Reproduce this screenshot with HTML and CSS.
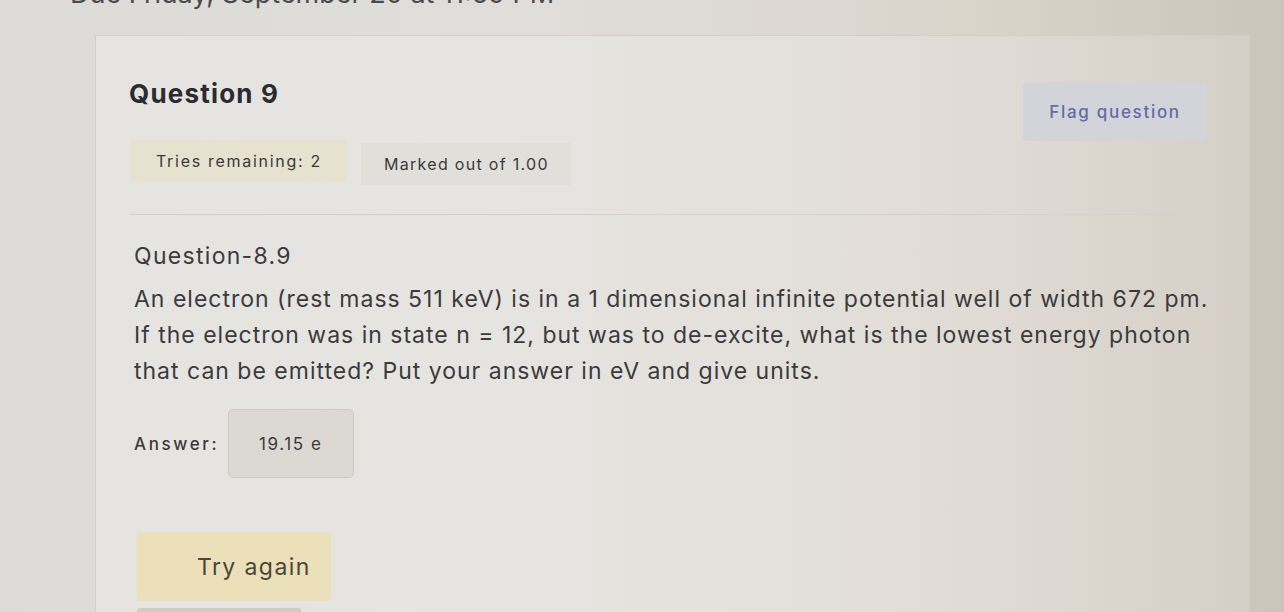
FILE: index.html
```html
<!DOCTYPE html>
<html lang="en">
<head>
<meta charset="utf-8">
<title>Question 9</title>
<link rel="stylesheet" href="styles.css">
</head>
<body>
<div class="due"><span class="due-text">Due Friday, September 20 at 11:59 PM</span></div>
<div class="card">
  <div class="head">
    <div class="head-left">
      <h2 class="qno">Question 9</h2>
      <div class="badges">
        <div class="badge tries">Tries remaining: 2</div>
        <div class="badge marked">Marked out of 1.00</div>
      </div>
    </div>
    <button class="flag">Flag question</button>
  </div>
  <div class="divider"></div>
  <div class="content">
    <p class="qname">Question-8.9</p>
    <p class="qtext">An electron (rest mass 511 keV) is in a 1 dimensional infinite potential well of width 672 pm.<br>If the electron was in state n = 12, but was to de-excite, what is the lowest energy photon<br>that can be emitted? Put your answer in eV and give units.</p>
    <div class="answer">
      <span class="answer-label">Answer:</span>
      <div class="answer-box">19.15 e</div>
    </div>
    <button class="retry">Try again</button>
    <div class="next"></div>
  </div>
</div>
</body>
</html>
```

FILE: styles.css
```css
html, body {
  margin: 0;
  padding: 0;
  height: 612px;
  overflow: hidden;
}
body {
  font-family: Inter, "Noto Sans", sans-serif;
  color: #3b3b3d;
  background: linear-gradient(90deg, #dcdbd8 0%, #e0dedb 40%, #dad4cb 75%, #cbc4ba 100%);
}
.due {
  height: 9px;
  overflow: hidden;
  padding-left: 70px;
}
.due-text {
  display: block;
  margin-top: -21px;
  font-size: 27px;
  line-height: 30px;
  color: #4a4a4c;
  white-space: nowrap;
}
.card {
  margin: 26px 0 0 95px;
  width: 1155px;
  height: 600px;
  box-sizing: border-box;
  border: 1px solid #d2cfca;
  border-bottom: none;
  background: linear-gradient(90deg, rgba(236,235,232,0.55) 0%, rgba(236,234,230,0.45) 60%, rgba(228,224,218,0.35) 100%);
  padding: 40px 42px 0 33px;
}
.head {
  display: flex;
  justify-content: space-between;
  align-items: flex-start;
}
.qno {
  margin: 0;
  font-size: 26px;
  line-height: 35px;
  font-weight: 700;
  letter-spacing: 1.2px;
  color: #2b2b31;
}
.badges {
  display: flex;
  gap: 15px;
  margin-top: 29px;
}
.badge {
  height: 42px;
  display: flex;
  align-items: center;
  font-size: 16px;
  color: #3a3a3c;
  box-sizing: border-box;
}
.tries {
  width: 215px;
  padding-left: 25px;
  background: #e7e2d0;
  margin-left: 2px;
  letter-spacing: 1.7px;
}
.marked {
  width: 210px;
  padding-left: 23px;
  background: #e1dfda;
  margin-top: 3px;
  letter-spacing: 1.3px;
}
.flag {
  margin-top: 6px;
  width: 184px;
  height: 59px;
  border: none;
  border-radius: 4px;
  background: #d3d3da;
  color: #656ba6;
  font-family: inherit;
  font-size: 17px;
  font-weight: 500;
  letter-spacing: 1.7px;
}
.divider {
  margin: 29px 8px 0 2px;
  height: 1px;
  background: #d4d1cc;
}
.content {
  padding: 23px 0 0 5px;
}
.qname {
  margin: 0;
  font-size: 23px;
  line-height: 36px;
  letter-spacing: 1.3px;
}
.qtext {
  margin: 7px 0 0 0;
  font-size: 23px;
  line-height: 36px;
  letter-spacing: 1.0px;
  white-space: nowrap;
}
.answer {
  display: flex;
  align-items: center;
  margin-top: 20px;
}
.answer-label {
  font-size: 17px;
  font-weight: 500;
  letter-spacing: 2.6px;
  width: 94px;
  color: #3a3a3c;
}
.answer-box {
  width: 126px;
  height: 69px;
  box-sizing: border-box;
  display: flex;
  align-items: center;
  padding-left: 30px;
  font-size: 17px;
  letter-spacing: 1.6px;
  background: #dcd9d4;
  border: 1px solid #cdcac4;
  border-radius: 5px;
  color: #3a3a3c;
}
.retry {
  display: block;
  margin: 54px 0 0 3px;
  width: 194px;
  height: 69px;
  border: none;
  border-radius: 3px;
  background: #ebe0b9;
  color: #4a4638;
  font-family: inherit;
  font-size: 23px;
  letter-spacing: 1.4px;
  text-align: left;
  padding-left: 60px;
}
.next {
  margin: 7px 0 0 3px;
  width: 164px;
  height: 20px;
  background: #cfccc7;
  border-radius: 3px;
}
```
